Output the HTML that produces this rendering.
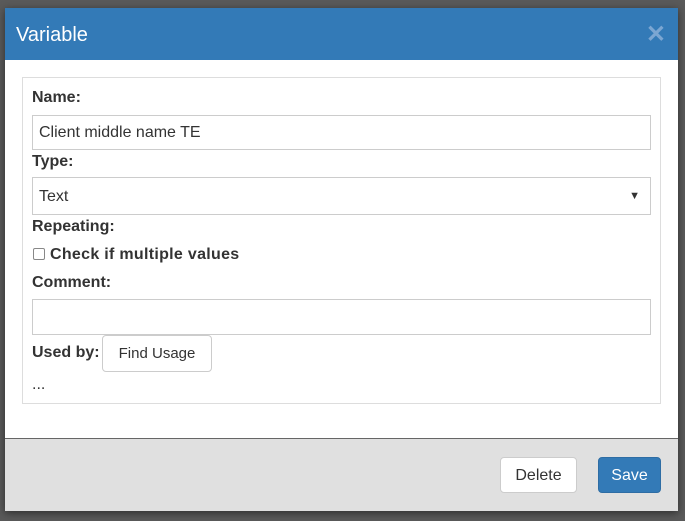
<!DOCTYPE html>
<html><head><style>
*{box-sizing:border-box;margin:0;padding:0}
body{width:685px;height:521px;background:#5a5a5a;font-family:"Liberation Sans",sans-serif;position:relative;overflow:hidden;color:#333}
.m{position:absolute;left:5px;top:8px;width:673px;height:503px;background:#fff;box-shadow:0 2px 8px rgba(0,0,0,.5)}
.h{position:absolute;left:0;top:0;width:673px;height:52px;background:#337ab7;color:#fff;font-size:20px;padding:16px 0 0 11px}
.x{position:absolute;right:12px;top:12px;color:#7ba6d2;font-size:24px;font-weight:bold}
.p{position:absolute;left:17px;top:69px;width:639px;height:327px;border:1px solid #ddd}
.a{position:absolute;font-size:16px}
.b{font-weight:bold}
.i{position:absolute;left:27px;width:619px;border:1px solid #ccc;font-size:16px;padding-left:6px;background:#fff}
.f{position:absolute;left:0;top:430px;width:673px;height:73px;background:#e0e0e0;border-top:1px solid #666}
.btn{position:absolute;border:1px solid #ccc;border-radius:4px;background:#fff;font-size:16px;text-align:center}
</style></head><body>
<div class="m">
<div class="h">Variable<span class="x">✕</span></div>
<div class="p"></div>
<div class="a b" style="left:27px;top:81px">Name:</div>
<div class="i" style="top:107px;height:35px;line-height:33px">Client middle name TE</div>
<div class="a b" style="left:27px;top:145px">Type:</div>
<div class="i" style="top:169px;height:38px;line-height:37px">Text<span style="position:absolute;right:10px;font-size:11px">▼</span></div>
<div class="a b" style="left:27px;top:210px">Repeating:</div>
<div style="position:absolute;left:28px;top:240px;width:12px;height:12px;border:1px solid #888;border-radius:2px;background:#fff"></div>
<div class="a b" style="left:45px;top:238px;letter-spacing:0.3px">Check if multiple values</div>
<div class="a b" style="left:27px;top:266px">Comment:</div>
<div class="i" style="top:291px;height:36px"></div>
<div class="a b" style="left:27px;top:336px">Used by:</div>
<div class="btn" style="left:97px;top:327px;width:110px;height:37px;line-height:36px;font-size:15px">Find Usage</div>
<div class="a" style="left:27px;top:368px">...</div>
<div class="f">
<div class="btn" style="left:495px;top:18px;width:77px;height:36px;line-height:36px">Delete</div>
<div class="btn" style="left:593px;top:18px;width:63px;height:36px;line-height:36px;background:#337ab7;border-color:#2e6da4;color:#fff">Save</div>
</div>
</div>
</body></html>
